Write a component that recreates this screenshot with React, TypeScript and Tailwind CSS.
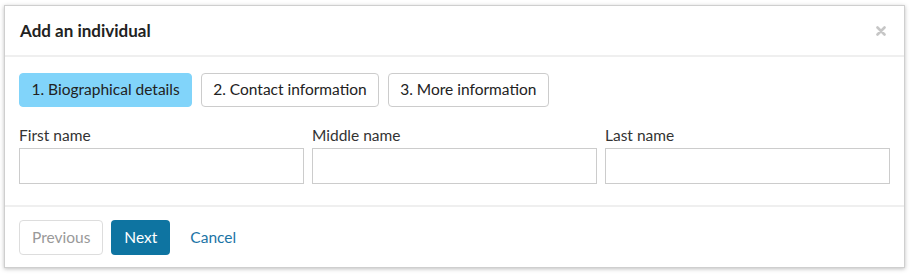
import React from 'react'

const fields = ['First name', 'Middle name', 'Last name']
const steps = ['1. Biographical details', '2. Contact information', '3. More information']

export default function App() {
  const [step] = React.useState(0)

  return (
    <div className="h-[275px] w-[910px] bg-white pt-[5px] pl-[4px] font-['Lato','Liberation_Sans',sans-serif] text-[#333]">
      <div className="w-[901px] border border-[#cfcfcf] bg-white shadow-[0_1px_4px_rgba(0,0,0,0.25)]">
        <div className="flex h-[51px] items-center justify-between border-b-2 border-[#efefef] pl-[15px] pr-[18px]">
          <h2 className="text-[17px] font-bold text-[#222]">Add an individual</h2>
          {/* close */}
          <svg width="10" height="10" viewBox="0 0 10 10" aria-hidden="true">
            <path d="M1.5 1.5 L8.5 8.5 M8.5 1.5 L1.5 8.5" stroke="#c6c6c6" strokeWidth="2.6" strokeLinecap="round" />
          </svg>
        </div>

        <div className="px-[14px] pt-[16px] pb-[21px]">
          <div className="flex gap-[8.5px]">
            {steps.map((s, i) => (
              <button
                key={s}
                className={
                  i === step
                    ? 'h-[34px] rounded-[4px] border border-[#81d4fa] bg-[#81d4fa] px-[11.5px] text-[15.5px] text-[#222]'
                    : 'h-[34px] rounded-[4px] border border-[#cccccc] bg-white px-[11.5px] text-[15.5px] text-[#222]'
                }
              >
                {s}
              </button>
            ))}
          </div>

          <div className="mt-[19px] grid grid-cols-3 gap-[8px]">
            {fields.map((f) => (
              <label key={f} className="flex flex-col">
                <span className="text-[15.5px] leading-[19px] text-[#333]">{f}</span>
                <input className="mt-[3px] h-[36px] border border-[#cccccc] bg-white px-2 outline-none" />
              </label>
            ))}
          </div>
        </div>

        <div className="flex items-center gap-[8px] border-t-2 border-[#efefef] px-[14px] pt-[13px] pb-[12px]">
          <button className="h-[35px] rounded-[4px] border border-[#dddddd] bg-white px-[12px] text-[15.5px] text-[#999]">
            Previous
          </button>
          <button className="h-[35px] rounded-[4px] bg-[#0e74a1] px-[13px] text-[15.5px] text-white">
            Next
          </button>
          <button className="h-[35px] px-[12px] text-[15.5px] text-[#1b74a6]">Cancel</button>
        </div>
      </div>
    </div>
  )
}
